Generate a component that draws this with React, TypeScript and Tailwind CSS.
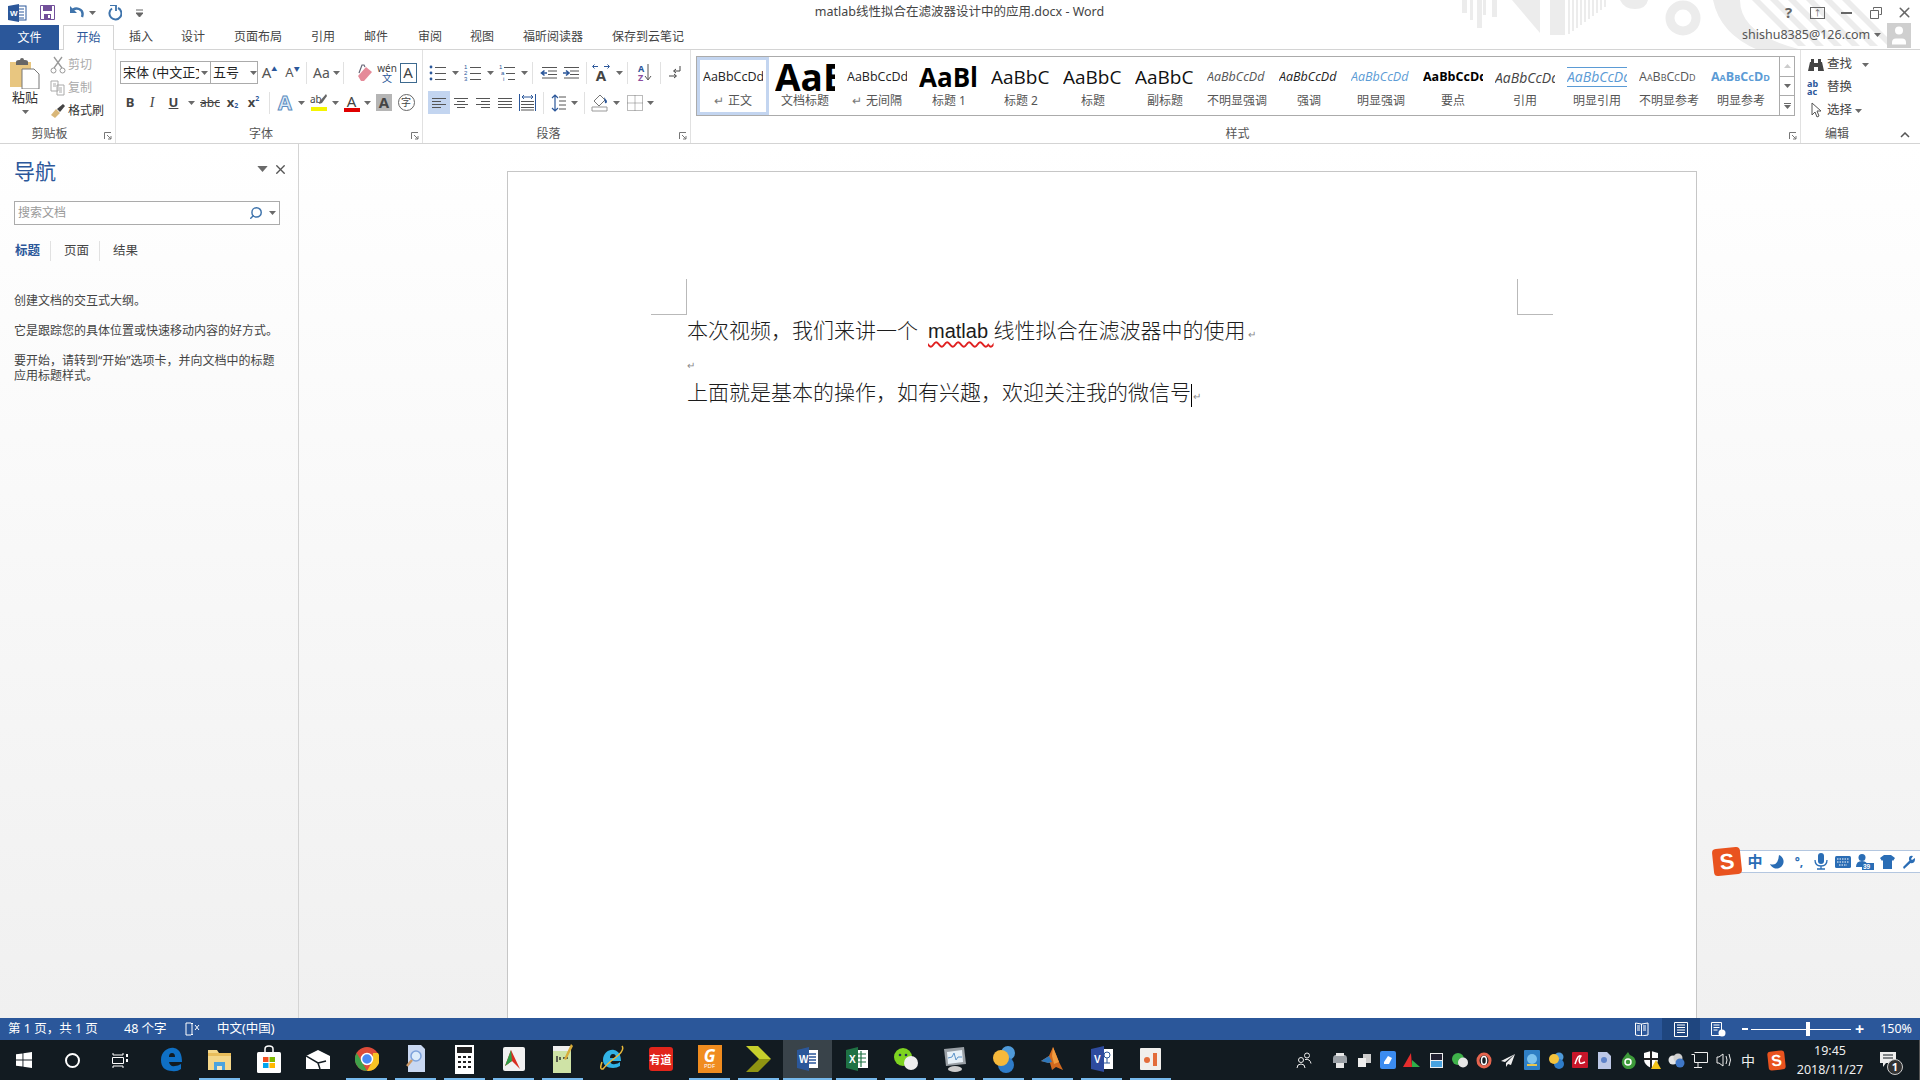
import type { ReactNode } from "react";
import { Search, User, X } from "lucide-react";

const BLUE = "#2b579a";

function Caret({ className = "", color = "#6a6a6a" }: { className?: string; color?: string }) {
  return (
    <svg width="7" height="4" viewBox="0 0 7 4" className={className}>
      <path d="M0 0h7L3.500 4z" fill={color} />
    </svg>
  );
}

function Sep({ className = "h-[22px]" }: { className?: string }) {
  return <div className={`w-px shrink-0 bg-[#e1e1e1] ${className}`} />;
}

function Launcher() {
  return (
    <svg width="8" height="8" viewBox="0 0 8 8" className="mt-[4px] shrink-0">
      <path d="M.5 7V.5H7M3 3l4 4M7 4v3H4" fill="none" stroke="#777" strokeWidth="1" />
    </svg>
  );
}

function Tool({ className, children }: { className: string; children: ReactNode }) {
  return <div className={`flex h-[23px] shrink-0 items-center justify-center ${className}`}>{children}</div>;
}

function Lines({ kind }: { kind: "left" | "center" | "right" | "justify" }) {
  const rows: [number, number][] =
    kind === "left"
      ? [[1, 15], [1, 10], [1, 15], [1, 10]]
      : kind === "center"
        ? [[1, 15], [4, 12], [1, 15], [4, 12]]
        : kind === "right"
          ? [[1, 15], [6, 15], [1, 15], [6, 15]]
          : [[1, 15], [1, 15], [1, 15], [1, 15]];
  return (
    <svg width="16" height="14" viewBox="0 0 16 14">
      {rows.map(([a, b], i) => (
        <path key={i} d={`M${a} ${2.5 + i * 3}H${b}`} stroke="#555" strokeWidth="1" />
      ))}
    </svg>
  );
}

function ListIcon({ kind }: { kind: "bullet" | "number" | "multi" }) {
  return (
    <svg width="18" height="16" viewBox="0 0 18 16">
      {[2, 8, 14].map((y, i) =>
        kind === "bullet" ? (
          <circle key={y} cx="2" cy={y} r="1.400" fill={BLUE} />
        ) : (
          <text key={y} x={kind === "multi" ? 1 + i * 2 : 0} y={y + 2} fontSize="6" fill={BLUE} fontFamily="Liberation Sans">
            {kind === "multi" ? ["1", "a", "i"][i] : i + 1}
          </text>
        ),
      )}
      {[2, 8, 14].map((y, i) => (
        <path key={y} d={`M${kind === "multi" ? 6 + i * 2 : 6} ${y + 0.5}H17`} stroke="#555" strokeWidth="1" />
      ))}
    </svg>
  );
}

function IndentIcon({ increase }: { increase?: boolean }) {
  return (
    <svg width="18" height="14" viewBox="0 0 18 14">
      {[1.5, 5, 8.5, 12].map((y, i) => (
        <path key={y} d={`M${i === 0 || i === 3 ? 2 : 8} ${y}H17`} stroke="#555" strokeWidth="1" />
      ))}
      <path
        d={increase ? "M1 7h5M4 4.500L7 7l-3 2.500" : "M7 7H2M4.500 4.500L1.500 7l3 2.500"}
        fill="none"
        stroke={BLUE}
        strokeWidth="1.600"
      />
    </svg>
  );
}

function WatermarkArt() {
  const c = "#ececec";
  return (
    <svg width="480" height="50" viewBox="0 0 480 50" className="pointer-events-none absolute top-0 right-0">
      {[22, 30, 37, 43, 52].map((x, i) => (
        <rect key={x} x={x} y="0" width={i % 2 ? 3 : 5} height={[13, 20, 28, 15, 17][i]} fill={c} />
      ))}
      <path d="M72 0h28v33z" fill={c} />
      <rect x="110" y="0" width="15" height="35" fill={c} />
      {[128, 132, 136, 140, 144, 148, 152, 156, 160, 164].map((x, i) => (
        <rect key={x} x={x} y="0" width="2" height={34 - i * 3} fill={c} />
      ))}
      <path d="M180 0h28q-2 9-13 9t-15-9z" fill={c} />
      <circle cx="243" cy="18" r="13" fill="none" stroke={c} strokeWidth="9" />
      <path d="M273 0q7 34 45 50h44Q300 35 300 0z" fill={c} />
      {[312, 330, 348, 366, 384, 402].map((x) => (
        <path key={x} d={`M${x} 0l46 46h8l-46-46z`} fill={c} />
      ))}
    </svg>
  );
}

function TitleBar() {
  return (
    <div className="flex h-[25px] shrink-0 items-center pl-[8px] text-[12.500px] text-[#444]">
      <svg width="19" height="18" viewBox="0 0 19 18" className="shrink-0">
        <rect x="6" y="2" width="12" height="14" fill="#fff" stroke={BLUE} />
        <path d="M10 5h6M10 8h6M10 11h6M10 14h6" stroke={BLUE} />
        <path d="M0 2l11-2v18L0 16z" fill={BLUE} />
        <text x="2" y="12" fontSize="8" fontWeight="700" fill="#fff" fontFamily="Liberation Sans">W</text>
      </svg>
      <svg width="15" height="15" viewBox="0 0 15 15" className="ml-[13px] shrink-0">
        <path d="M.5.5h14v14H.5z" fill="#fff" stroke="#72509a" />
        <path d="M3 1h9v5H3zM4 9h7v5H4z" fill="#72509a" />
        <rect x="8" y="10" width="2" height="3" fill="#fff" />
      </svg>
      <svg width="16" height="15" viewBox="0 0 16 15" className="ml-[14px] shrink-0">
        <path d="M2 7q3-5 8-3t3 8" fill="none" stroke="#3f74ac" strokeWidth="2.400" />
        <path d="M1 1v7h7z" fill="#3f74ac" />
      </svg>
      <Caret className="ml-[4px]" />
      <svg width="15" height="16" viewBox="0 0 15 16" className="ml-[11px] shrink-0">
        <path d="M5 3.500A6 6 0 1 0 11 3" fill="none" stroke="#3f74ac" strokeWidth="2" />
        <path d="M3 0h6v6" fill="none" stroke="#3f74ac" strokeWidth="1.800" />
      </svg>
      <svg width="7" height="8" viewBox="0 0 7 8" className="ml-[14px] shrink-0">
        <path d="M0 1h7M0 4h7l-3.500 4z" stroke="#666" fill="#666" />
      </svg>
      <div className="flex-1 pl-[2px] text-center text-[#444]">matlab线性拟合在滤波器设计中的应用.docx - Word</div>
      <div className="relative flex h-[25px] w-[146px] shrink-0 items-center text-[#666]">
        <div className="flex w-[29px] justify-center text-[15px] font-bold">?</div>
        <div className="flex w-[29px] justify-center">
          <div className="flex h-[12px] w-[15px] items-center justify-center border border-[#666] text-[8px] leading-none">↑</div>
        </div>
        <div className="flex w-[29px] justify-center">
          <div className="h-[2px] w-[11px] bg-[#666]" />
        </div>
        <div className="flex w-[29px] justify-center">
          <svg width="12" height="12" viewBox="0 0 12 12">
            <path d="M3.500 2.500V.5h8v7h-2M.5 3.500h8v8h-8z" fill="none" stroke="#666" />
          </svg>
        </div>
        <div className="flex w-[29px] justify-center">
          <X size={17} strokeWidth={2.200} />
        </div>
      </div>
    </div>
  );
}

function TabRow() {
  const tabs: [string, string][] = [
    ["插入", "w-[54px]"],
    ["设计", "w-[50px]"],
    ["页面布局", "w-[80px]"],
    ["引用", "w-[50px]"],
    ["邮件", "w-[56px]"],
    ["审阅", "w-[52px]"],
    ["视图", "w-[52px]"],
    ["福昕阅读器", "w-[90px]"],
    ["保存到云笔记", "w-[100px]"],
  ];
  return (
    <div className="relative flex h-[25px] shrink-0 border-b border-[#d4d4d4] text-[12px] text-[#444]">
      <div className="flex h-[25px] w-[59px] items-center justify-center bg-[#2b579a] text-white">文件</div>
      <div className="relative z-10 ml-[4px] flex h-[25px] w-[51px] items-center justify-center border-x border-t border-[#d4d4d4] bg-white text-[#2b579a]">
        开始
      </div>
      {tabs.map(([label, w]) => (
        <div key={label} className={`flex items-center justify-center ${w}`}>
          {label}
        </div>
      ))}
      <div className="ml-auto flex w-[178px] items-center pb-[4px] text-[#555]">
        <span className="w-[130px] text-[12.500px] whitespace-nowrap">shishu8385@126.com</span>
        <Caret className="ml-[2px]" />
        <div className="ml-[6px] flex h-[25px] w-[24px] items-end justify-center overflow-hidden bg-[#cfcfcf] pb-0 text-white">
          <User size={25} fill="#fff" strokeWidth={0} />
        </div>
      </div>
    </div>
  );
}

function Group({ label, className, launcher, children }: { label: string; className: string; launcher?: boolean; children: ReactNode }) {
  return (
    <div className={`flex shrink-0 flex-col border-r border-[#e1e1e1] ${className}`}>
      <div className="h-[75px] overflow-hidden">{children}</div>
      <div className="flex h-[18px] items-center pr-[3px] text-[12px] text-[#555]">
        <span className={`flex-1 text-center ${launcher ? "mr-[5px]" : ""}`}>{label}</span>
        {launcher && <Launcher />}
      </div>
    </div>
  );
}

function Clipboard() {
  return (
    <Group label="剪贴板" className="w-[116px]" launcher>
      <div className="flex">
        <div className="flex w-[50px] flex-col items-center pt-[8px] text-[13px] text-[#333]">
          <svg width="30" height="31" viewBox="0 0 30 31">
            <path d="M0 4h21v25H0z" fill="#e8c680" />
            <path d="M6 4q0-2 3-2h1q0-2 2-2t2 2h1q3 0 3 2v3H6z" fill="#666" />
            <path d="M12 11h12l5 5v15H12z" fill="#fff" stroke="#777" />
          </svg>
          <span className="leading-[17px]">粘贴</span>
          <Caret className="mt-[4px]" />
        </div>
        <div className="flex flex-col pt-[3px] text-[12px] leading-[23px]">
          <div className="flex h-[23px] items-center text-[#aaa]">
            <svg width="16" height="18" viewBox="0 0 16 18">
              <path d="M4 1l8 11M12 1L4 12" stroke="#999" strokeWidth="1.300" />
              <circle cx="3.500" cy="14.500" r="2.500" fill="none" stroke="#999" />
              <circle cx="12.500" cy="14.500" r="2.500" fill="none" stroke="#999" />
            </svg>
            <span className="ml-[2px]">剪切</span>
          </div>
          <div className="flex h-[23px] items-center text-[#aaa]">
            <svg width="16" height="16" viewBox="0 0 16 16">
              <path d="M1 1h7v10H1zM7 5h7v10H7z" fill="#fff" stroke="#aaa" />
              <path d="M3 4h3M3 6h3M9 8h3M9 10h3M9 12h3" stroke="#aaa" />
            </svg>
            <span className="ml-[2px]">复制</span>
          </div>
          <div className="flex h-[23px] items-center text-[#333]">
            <svg width="16" height="16" viewBox="0 0 16 16">
              <path d="M1 12l5-6 4 4-5 5z" fill="#d9b779" />
              <path d="M7 6l6-5 2 2-5 6z" fill="#444" />
            </svg>
            <span className="ml-[2px]">格式刷</span>
          </div>
        </div>
      </div>
    </Group>
  );
}

function FontGroup() {
  return (
    <Group label="字体" className="w-[307px]" launcher>
      <div className="flex h-[34px] items-center pl-[4px] pt-[11px]">
        <div className="flex h-[23px] w-[91px] items-center border border-[#ababab] pl-[2px] text-[13px] text-[#222]">
          <span className="w-[76px] overflow-hidden whitespace-nowrap">宋体 (中文正文)</span>
          <Caret className="ml-[2px]" />
        </div>
        <div className="-ml-px flex h-[23px] w-[48px] items-center border border-[#ababab] pl-[2px] text-[13px] text-[#222]">
          <span className="w-[33px]">五号</span>
          <Caret className="ml-[4px]" />
        </div>
        <Tool className="w-[23px] text-[15px] text-[#555]">A<span className="mb-[6px] text-[6px] text-[#2b579a]">▲</span></Tool>
        <Tool className="w-[23px] text-[13px] text-[#555]">A<span className="mb-[6px] text-[6px] text-[#2b579a]">▼</span></Tool>
        <Sep className="ml-[2px] h-[22px]" />
        <Tool className="ml-[3px] w-[33px] text-[14px] text-[#555]">Aa<Caret className="ml-[3px]" /></Tool>
        <Sep />
        <Tool className="ml-[10px] w-[22px]">
          <svg width="18" height="18" viewBox="0 0 18 18">
            <path d="M2 12l8-9 6 5-8 9H5z" fill="#e58a99" />
            <path d="M3 9l3-8h2l1 2" fill="none" stroke="#667" strokeWidth="1.200" />
          </svg>
        </Tool>
        <Tool className="w-[22px] flex-col text-[10px] leading-[10px] text-[#444]">
          wén<span className="text-[#2b579a]">文</span>
        </Tool>
        <Tool className="w-[20px]">
          <div className="flex h-[20px] w-[17px] items-center justify-center border border-[#3d6a8f] text-[15px] text-[#444]">A</div>
        </Tool>
      </div>
      <div className="mt-[7px] flex items-center pl-[3px] text-[#444]">
        <Tool className="w-[22px] text-[13px] font-bold">B</Tool>
        <Tool className="w-[22px] font-['Liberation_Serif',serif] text-[14px] italic">I</Tool>
        <Tool className="w-[21px] text-[13px] font-bold underline">U</Tool>
        <Tool className="w-[14px]"><Caret /></Tool>
        <Tool className="w-[24px] text-[12px] line-through">abc</Tool>
        <Tool className="w-[21px] text-[13px] font-bold">x<span className="mt-[7px] text-[7px] text-[#2b579a]">2</span></Tool>
        <Tool className="w-[21px] text-[13px] font-bold">x<span className="mb-[7px] text-[7px] text-[#2b579a]">2</span></Tool>
        <Sep className="ml-[5px] h-[22px]" />
        <Tool className="ml-[4px] w-[22px] text-[20px] font-bold text-[#dceaf7] [-webkit-text-stroke:1px_#5b8cc0]">A</Tool>
        <Tool className="w-[10px]"><Caret /></Tool>
        <Tool className="w-[25px]">
          <div className="relative flex w-[17px] flex-col items-center">
            <span className="h-[11px] self-start text-[10px] leading-[10px] text-[#444]">ab</span>
            <svg width="9" height="11" viewBox="0 0 9 11" className="absolute top-0 right-0">
              <path d="M8 0l1 2-5 7-3 1 1-3z" fill="#666" />
            </svg>
            <div className="mt-[2px] h-[4px] w-[16px] bg-[#f5f500]" />
          </div>
        </Tool>
        <Tool className="w-[8px]"><Caret /></Tool>
        <Tool className="ml-[1px] w-[23px]">
          <div className="flex w-[17px] flex-col items-center">
            <span className="h-[14px] text-[15px] leading-[14px] text-[#444]">A</span>
            <div className="h-[4px] w-[16px] bg-[#e00000]" />
          </div>
        </Tool>
        <Tool className="w-[9px]"><Caret /></Tool>
        <Tool className="ml-[1px] w-[22px]">
          <div className="flex h-[17px] w-[16px] items-center justify-center bg-[#b5b5b5] text-[15px] font-bold text-[#444]">A</div>
        </Tool>
        <Tool className="w-[22px]">
          <div className="flex h-[17px] w-[17px] items-center justify-center rounded-full border border-[#666] text-[10px]">字</div>
        </Tool>
      </div>
    </Group>
  );
}

function ParagraphGroup() {
  return (
    <Group label="段落" className="w-[268px]" launcher>
      <div className="flex h-[34px] items-center pl-[5px] pt-[11px]">
        <Tool className="w-[20px]"><ListIcon kind="bullet" /></Tool>
        <Tool className="w-[14px]"><Caret /></Tool>
        <Tool className="w-[22px]"><ListIcon kind="number" /></Tool>
        <Tool className="w-[12px]"><Caret /></Tool>
        <Tool className="w-[22px]"><ListIcon kind="multi" /></Tool>
        <Tool className="w-[12px]"><Caret /></Tool>
        <Sep className="ml-[2px] h-[22px]" />
        <Tool className="ml-[5px] w-[22px]"><IndentIcon /></Tool>
        <Tool className="w-[22px]"><IndentIcon increase /></Tool>
        <Sep className="ml-[4px] h-[22px]" />
        <Tool className="ml-[2px] w-[24px]">
          <div className="flex flex-col items-center text-[15px] leading-[13px] font-bold text-[#444]">
            <svg width="18" height="5" viewBox="0 0 18 5">
              <path d="M1 2.500h5M2.500 .5L.5 2.500l2 2M12 2.500h5M15.500 .5l2 2-2 2" fill="none" stroke={BLUE} />
            </svg>
            A
          </div>
        </Tool>
        <Tool className="w-[12px]"><Caret /></Tool>
        <Sep className="ml-[2px] h-[22px]" />
        <Tool className="ml-[6px] w-[22px]">
          <div className="flex flex-col text-[9px] leading-[9px] font-bold">
            <span className="text-[#2b579a]">A</span>
            <span className="text-[#8a4d9e]">Z</span>
          </div>
          <svg width="8" height="17" viewBox="0 0 8 17"><path d="M4 0v15M1 12l3 4 3-4" fill="none" stroke="#555" /></svg>
        </Tool>
        <Sep className="ml-[4px] h-[22px]" />
        <Tool className="ml-[4px] w-[22px]">
          <svg width="16" height="15" viewBox="0 0 16 15">
            <path d="M12 1v5H6M8 4L5.500 6 8 8" fill="none" stroke="#444" />
            <path d="M1 11h7M6 9l2.500 2L6 13" fill="none" stroke="#444" />
          </svg>
        </Tool>
      </div>
      <div className="mt-[7px] flex items-center pl-[5px]">
        <Tool className="w-[22px] bg-[#c3d5f0]"><Lines kind="left" /></Tool>
        <Tool className="w-[22px]"><Lines kind="center" /></Tool>
        <Tool className="w-[22px]"><Lines kind="right" /></Tool>
        <Tool className="w-[22px]"><Lines kind="justify" /></Tool>
        <Tool className="w-[22px]">
          <svg width="17" height="17" viewBox="0 0 17 17">
            <path d="M.5 0v17M16.500 0v17" stroke={BLUE} />
            <path d="M3 3h11M5 1L3 3l2 2M12 1l2 2-2 2" fill="none" stroke={BLUE} />
            <path d="M2 7.500h13M2 10.500h13M2 13.500h13M2 16h13" stroke="#555" />
          </svg>
        </Tool>
        <Sep className="ml-[5px] h-[22px]" />
        <Tool className="ml-[4px] w-[22px]">
          <svg width="16" height="18" viewBox="0 0 16 18">
            <path d="M4 1v16M1 4l3-3 3 3M1 14l3 3 3-3" fill="none" stroke={BLUE} strokeWidth="1.200" />
            <path d="M8 3h7M8 7h7M8 11h7M8 15h7" stroke="#555" />
          </svg>
        </Tool>
        <Tool className="w-[8px]"><Caret /></Tool>
        <Sep className="ml-[6px] h-[22px]" />
        <Tool className="ml-[4px] w-[22px]">
          <svg width="18" height="19" viewBox="0 0 18 19">
            <path d="M3 8l6-6 5 5-6 6z" fill="#fff" stroke="#777" />
            <path d="M13 4l3 4q0 3-2 2z" fill={BLUE} />
            <path d="M1 14h15v4H1z" fill="#fff" stroke="#999" />
          </svg>
        </Tool>
        <Tool className="w-[11px]"><Caret /></Tool>
        <Tool className="ml-[3px] w-[20px]">
          <svg width="16" height="16" viewBox="0 0 16 16">
            <path d="M.5.5h15v15H.5zM8 .5v15M.5 8h15" fill="none" stroke="#777" strokeDasharray="1 1" />
          </svg>
        </Tool>
        <Tool className="ml-[1px] w-[8px]"><Caret /></Tool>
      </div>
    </Group>
  );
}

type StyleItem = { label: ReactNode; preview: string; cls: string };

const STYLES: StyleItem[] = [
  { label: <><span className="mr-[4px] text-[#777]">↵</span>正文</>, preview: "AaBbCcDd", cls: "text-[12.500px] text-[#222]" },
  { label: "文档标题", preview: "AaBl", cls: "text-[37px] font-bold text-black leading-[30px]" },
  { label: <><span className="mr-[4px] text-[#777]">↵</span>无间隔</>, preview: "AaBbCcDd", cls: "text-[12.500px] text-[#222]" },
  { label: "标题 1", preview: "AaBl", cls: "text-[26px] font-bold text-black" },
  { label: "标题 2", preview: "AaBbC", cls: "text-[19px] text-[#111]" },
  { label: "标题", preview: "AaBbC", cls: "text-[19px] text-[#111]" },
  { label: "副标题", preview: "AaBbC", cls: "text-[19px] text-[#111]" },
  { label: "不明显强调", preview: "AaBbCcDd", cls: "text-[12.500px] italic text-[#555]" },
  { label: "强调", preview: "AaBbCcDd", cls: "text-[12.500px] italic text-[#222]" },
  { label: "明显强调", preview: "AaBbCcDd", cls: "text-[12.500px] italic text-[#5b9bd5]" },
  { label: "要点", preview: "AaBbCcDd", cls: "text-[12.500px] font-bold text-black" },
  { label: "引用", preview: "AaBbCcDd", cls: "text-[14px] italic text-[#444]" },
  { label: "明显引用", preview: "AaBbCcDd", cls: "text-[14px] italic text-[#5b9bd5] border-y border-[#5b9bd5] leading-[18px]" },
  { label: "不明显参考", preview: "AaBbCcDd", cls: "text-[12.500px] [font-variant:small-caps] text-[#555]" },
  { label: "明显参考", preview: "AaBbCcDd", cls: "text-[12.500px] [font-variant:small-caps] font-bold text-[#5b9bd5]" },
];

function StylesGroup() {
  return (
    <Group label="样式" className="w-[1110px]" launcher>
      <div className="flex pt-[6px] pl-[5px]">
        <div className="flex h-[60px] w-[1084px] border border-[#ababab] bg-white">
          {STYLES.map((s, i) => (
            <div
              key={i}
              className={`flex h-full w-[72px] shrink-0 flex-col items-center ${i === 0 ? "border-[3px] border-[#c3d5f0] pt-[2px]" : "pt-[5px]"}`}
            >
              <div className="flex h-[30px] w-[60px] items-center justify-start overflow-hidden">
                <span className={`whitespace-nowrap font-['Open_Sans',sans-serif] ${s.cls}`}>{s.preview}</span>
              </div>
              <div className="mt-[1px] text-[12px] leading-[16px] whitespace-nowrap text-[#555]">{s.label}</div>
            </div>
          ))}
        </div>
        <div className="flex h-[60px] w-[15px] flex-col border-y border-r border-[#ababab]">
          <div className="flex flex-1 items-center justify-center border-b border-[#ababab]"><Caret className="rotate-180" color="#ccc" /></div>
          <div className="flex flex-1 items-center justify-center border-b border-[#ababab]"><Caret /></div>
          <div className="flex flex-1 flex-col items-center justify-center">
            <div className="mb-[1px] h-px w-[7px] bg-[#6a6a6a]" />
            <Caret />
          </div>
        </div>
      </div>
    </Group>
  );
}

function EditGroup() {
  return (
    <Group label="编辑" className="w-[75px] border-r-0">
      <div className="flex flex-col pt-[3px] pl-[6px] text-[12.500px] text-[#444]">
        <div className="flex h-[23px] items-center">
          <svg width="18" height="16" viewBox="0 0 18 16">
            <path d="M1 14l2-9h4v9zM11 14V5h4l2 9zM4 2h3v3H4zM11 2h3v3h-3zM7 6h4v4H7z" fill="#444" />
          </svg>
          <span className="ml-[2px]">查找</span>
          <Caret className="ml-[10px]" />
        </div>
        <div className="flex h-[23px] items-center">
          <div className="flex w-[18px] flex-col text-[9px] leading-[8px] font-bold">
            <span className="text-[#2b579a]">ab</span>
            <span className="text-[#2b579a]">ac</span>
          </div>
          <span className="ml-[2px]">替换</span>
        </div>
        <div className="flex h-[23px] items-center">
          <svg width="18" height="17" viewBox="0 0 18 17">
            <path d="M5 1v12l3-3 2 5 2-1-2-5h4z" fill="#fff" stroke="#555" />
          </svg>
          <span className="ml-[2px]">选择</span>
          <Caret className="ml-[3px]" />
        </div>
      </div>
    </Group>
  );
}

function Ribbon() {
  return (
    <div className="flex h-[94px] shrink-0 border-b border-[#d4d4d4] bg-white">
      <Clipboard />
      <FontGroup />
      <ParagraphGroup />
      <StylesGroup />
      <EditGroup />
      <div className="flex flex-1 items-end justify-center pb-[5px] pl-[14px]">
        <svg width="10" height="6" viewBox="0 0 10 6"><path d="M1 5l4-4 4 4" fill="none" stroke="#555" strokeWidth="1.500" /></svg>
      </div>
    </div>
  );
}

function NavPane() {
  return (
    <div className="flex w-[299px] shrink-0 flex-col border-r border-[#d4d4d4] pl-[14px] pr-[18px] text-[12px] text-[#444]">
      <div className="-mr-[8px] flex h-[54px] items-center">
        <span className="flex-1 text-[21px] leading-none text-[#2b579a]">导航</span>
        <Caret className="mb-[4px] scale-150" />
        <X size={15} strokeWidth={2.200} className="mb-[4px] ml-[7px] text-[#555]" />
      </div>
      <div className="mt-[3px] flex h-[24px] items-center border border-[#ababab] bg-white pr-[3px] pl-[3px] text-[#999]">
        <span className="flex-1">搜索文档</span>
        <Search size={14} strokeWidth={2.500} className="-scale-x-100 text-[#3f74ac]" />
        <Caret className="ml-[6px]" />
      </div>
      <div className="mt-[14px] flex h-[24px] items-center text-[12.500px]">
        <span className="w-[36px] pl-[1px] font-bold text-[#2b579a]">标题</span>
        <Sep className="h-[20px]" />
        <span className="w-[48px] pl-[13px]">页面</span>
        <Sep className="h-[20px]" />
        <span className="pl-[13px]">结果</span>
      </div>
      <p className="mt-[30px] leading-[15px]">创建文档的交互式大纲。</p>
      <p className="mt-[15px] leading-[15px]">它是跟踪您的具体位置或快速移动内容的好方式。</p>
      <p className="mt-[15px] leading-[15px]">要开始，请转到“开始”选项卡，并向文档中的标题应用标题样式。</p>
    </div>
  );
}

function CropMark({ className }: { className: string }) {
  return <div className={`absolute h-[36px] w-[36px] border-[#b9b9b9] ${className}`} />;
}

function ParaMark() {
  return <span className="ml-[2px] font-['Liberation_Sans',sans-serif] text-[10px] leading-none text-[#8a8a8a]">↵</span>;
}

function Document() {
  return (
    <div className="flex min-w-0 flex-1 pt-[27px] pl-[208px]">
      <div className="relative w-[1190px] border-x border-t border-[#c6c6c6] bg-white pt-[143px] pl-[179px] text-[21px] leading-[31px] font-light text-[#1c1c1c]">
        <CropMark className="top-[107px] left-[143px] border-r border-b" />
        <CropMark className="top-[107px] right-[143px] border-b border-l" />
        <p className="whitespace-nowrap">
          本次视频，我们来讲一个
          <span className="ml-[10px] font-['Liberation_Sans',sans-serif] text-[20px] leading-none font-normal underline decoration-[#e02020] decoration-wavy decoration-[1.500px] underline-offset-[3px]">
            matlab{"\u00a0"}
          </span>
          线性拟合在滤波器中的使用
          <ParaMark />
        </p>
        <p className="-ml-[2px]"><ParaMark /></p>
        <p className="whitespace-nowrap">
          上面就是基本的操作，如有兴趣，欢迎关注我的微信号
          <span className="relative"><span className="absolute top-[6px] left-0 h-[23px] w-px bg-black" /></span>
          <ParaMark />
        </p>
      </div>
    </div>
  );
}

function SogouBar() {
  const item = "flex w-[22px] shrink-0 justify-center";
  return (
    <div className="absolute top-[848px] right-0 flex items-center">
      <div className="relative z-10 flex h-[27px] w-[28px] -rotate-6 items-center justify-center rounded-[4px] bg-[#e9531f] font-['Liberation_Sans',sans-serif] text-[22px] font-bold text-white">
        S
      </div>
      <div className="-ml-[2px] flex h-[23px] w-[181px] items-center border-y border-[#b4c7e0] bg-white pl-[5px] text-[#2a6db5]">
        <div className={`${item} text-[15px] font-bold`}>中</div>
        <div className={item}><svg width="14" height="14" viewBox="0 0 14 14"><path d="M9 0a7 7 0 1 1-9 9q8 3 9-9z" fill="currentColor" /></svg></div>
        <div className={`${item} text-[12px] leading-none font-bold`}>°,</div>
        <div className={item}><svg width="14" height="17" viewBox="0 0 14 17"><rect x="4" y="0" width="6" height="11" rx="3" fill="currentColor" /><path d="M1 7q0 6 6 6t6-6M7 13v3M3 16h8" fill="none" stroke="currentColor" strokeWidth="1.300" /></svg></div>
        <div className={item}><svg width="16" height="12" viewBox="0 0 16 12"><rect width="16" height="12" rx="1.500" fill="currentColor" /><path d="M2 3h12M2 6h12M4 9h8" stroke="#fff" strokeDasharray="1.500 1" /></svg></div>
        <div className={item}>
          <svg width="18" height="16" viewBox="0 0 18 16">
            <circle cx="6" cy="3.500" r="3.500" fill="currentColor" />
            <path d="M0 13q0-6 6-6t5 6z" fill="currentColor" />
            <rect x="6" y="9" width="12" height="7" fill="currentColor" />
            <text x="7" y="15" fontSize="6.500" fontWeight="700" fill="#fff" fontFamily="Liberation Sans">39</text>
          </svg>
        </div>
        <div className={item}><svg width="15" height="14" viewBox="0 0 15 14"><path d="M0 3l4-3h7l4 3-2 3-1-1v9H3V5L2 6z" fill="currentColor" /></svg></div>
        <div className={item}><svg width="14" height="14" viewBox="0 0 14 14"><path d="M13 3l-3 2-1-1 2-3Q7 0 7 4q0 1 .5 1.500L1 12l1 2 6.500-6q5 1 4.500-5z" fill="currentColor" /></svg></div>
      </div>
    </div>
  );
}

function StatusBar() {
  return (
    <div className="flex h-[22px] shrink-0 items-center bg-[#2b579a] pl-[8px] text-[12.500px] text-white">
      <span className="w-[116px]">第 1 页，共 1 页</span>
      <span className="w-[61px]">48 个字</span>
      <svg width="15" height="14" viewBox="0 0 15 14"><path d="M1 1h5l1 1 1-1h0M1 1v12h5l1-1v-10M7 12l1 1" fill="none" stroke="#fff" /><path d="M10 3l4 5M14 3l-4 5" stroke="#fff" /></svg>
      <span className="ml-[17px]">中文(中国)</span>
      <div className="ml-auto flex h-full items-center pr-[8px]">
        <svg width="14" height="14" viewBox="0 0 14 14"><path d="M.5 1l6 1 6.500-1v12l-6.500 1-6-1zM6.500 2v12M2 4h3M2 6h3M2 8h3M8 4h3M8 6h3M8 8h3" fill="none" stroke="#fff" /></svg>
        <div className="ml-[13px] flex h-full w-[38px] items-center justify-center bg-[#1f467f]">
          <svg width="14" height="15" viewBox="0 0 14 15"><path d="M.5.5h13v14H.5zM3 3h8M3 5.500h8M3 8h8M3 10.500h8" fill="none" stroke="#fff" /></svg>
        </div>
        <svg width="15" height="15" viewBox="0 0 15 15" className="ml-[11px]"><path d="M.5.500h10v13H.5zM2.500 3h6M2.500 5.500h6M2.500 8h4" fill="none" stroke="#fff" /><circle cx="11" cy="11" r="3.500" fill="#fff" /></svg>
        <div className="ml-[16px] h-[2px] w-[6px] bg-white" />
        <div className="relative ml-[3px] flex h-[14px] w-[100px] items-center">
          <div className="h-px w-full bg-white" />
          <div className="absolute left-[55px] h-[14px] w-[4px] bg-white" />
        </div>
        <span className="ml-[4px] text-[16px] leading-none font-bold">+</span>
        <span className="ml-[16px] text-[12.500px]">150%</span>
      </div>
    </div>
  );
}

function TaskIcon({ run, active, children }: { run?: boolean; active?: boolean; children: ReactNode }) {
  return (
    <div className={`relative flex h-10 w-[49px] shrink-0 items-center justify-center pb-[2px] ${active ? "bg-[#39434a]" : ""}`}>
      {children}
      {run && <div className={`absolute bottom-0 h-[2px] bg-[#76b9ed] ${active ? "inset-x-0" : "inset-x-[4px]"}`} />}
    </div>
  );
}

function Taskbar() {
  const tray: ReactNode[] = [
    <svg key="a" width="17" height="17" viewBox="0 0 17 17"><path d="M1 6q0-2 2-3h10q2 1 2 3v5H1z" fill="#9aa0a6" /><path d="M4 1h8v3H4zM4 11h8v5H4z" fill="#e8e8e8" /></svg>,
    <svg key="b" width="13" height="13" viewBox="0 0 13 13"><path d="M5 0h8v9H5z" fill="#ccc" /><path d="M0 4h8v9H0z" fill="#eee" /></svg>,
    <svg key="c" width="16" height="18" viewBox="0 0 16 18"><rect width="16" height="18" rx="2" fill="#3b8cf0" /><path d="M4 11l4-6 4 2-3 6H4z" fill="#fff" /></svg>,
    <svg key="d" width="18" height="14" viewBox="0 0 18 14"><path d="M0 14L8 0l1 14z" fill="#e52d2d" /><path d="M9 7l8 7H9z" fill="#2fb04a" /></svg>,
    <svg key="e" width="13" height="15" viewBox="0 0 13 15"><rect width="13" height="15" fill="#eee" /><rect x="1" y="8" width="11" height="6" fill="#4aa3df" /><rect x="1" y="1" width="11" height="6" fill="#223" /></svg>,
    <svg key="f" width="18" height="15" viewBox="0 0 18 15"><circle cx="7" cy="6" r="6" fill="#3fb24a" /><circle cx="12" cy="9.500" r="5" fill="#e6e6e6" /></svg>,
    <svg key="g" width="16" height="17" viewBox="0 0 16 17"><ellipse cx="8" cy="8.500" rx="6" ry="6.500" fill="none" stroke="#e4644e" strokeWidth="3" /><ellipse cx="8" cy="8.500" rx="2.500" ry="4" fill="none" stroke="#fff" strokeWidth="1.500" /></svg>,
    <svg key="h" width="14" height="13" viewBox="0 0 14 13"><path d="M14 0L0 7l4 1zM14 0L5 9v4l2-3 3 1z" fill="#eee" /></svg>,
    <svg key="i" width="16" height="20" viewBox="0 0 16 20"><rect width="16" height="20" rx="1" fill="#2f7fc5" /><circle cx="8" cy="9" r="5" fill="#7ec3ee" /><path d="M3 15h10" stroke="#e8c64f" strokeWidth="2" /></svg>,
    <svg key="j" width="16" height="18" viewBox="0 0 16 18"><circle cx="11" cy="6" r="4.500" fill="#4f9ad9" /><circle cx="11" cy="13" r="5" fill="#2e7cc9" /><circle cx="6" cy="8" r="5" fill="#f3c33e" /></svg>,
    <svg key="k" width="16" height="16" viewBox="0 0 16 16"><rect width="16" height="16" rx="1" fill="#c8162a" /><path d="M3 12q3-10 6-8-3 4-1 7 1 1 5-1" fill="none" stroke="#fff" strokeWidth="1.500" /></svg>,
    <svg key="l" width="13" height="17" viewBox="0 0 13 17"><path d="M0 0h9l4 4v13H0z" fill="#bcc7e6" /><circle cx="6" cy="8" r="3" fill="#5e82c9" /></svg>,
    <svg key="m" width="16" height="17" viewBox="0 0 16 17"><path d="M8 0q1 3 4 4a7 7 0 1 1-8 1z" fill="#3d9a3a" /><circle cx="8" cy="10" r="3" fill="none" stroke="#fff" strokeWidth="1.500" /></svg>,
    <svg key="n" width="18" height="18" viewBox="0 0 18 18"><path d="M8 0l7 2v6q0 6-7 9-7-3-7-9V2z" fill="#fff" /><path d="M8 0v17M1 8h14" stroke="#222" strokeWidth="2" /><path d="M13 9l5 9H8z" fill="#f5c518" /></svg>,
    <svg key="o" width="18" height="15" viewBox="0 0 18 15"><circle cx="6" cy="7" r="4.500" fill="#e5e5e5" /><circle cx="11" cy="5" r="4.500" fill="#cfcfcf" /><circle cx="13" cy="10" r="4.500" fill="#3f77c7" /></svg>,
    <svg key="p" width="18" height="16" viewBox="0 0 18 16"><path d="M.5 2.500h3v8h13v-10h-13M7 10.500v5M3 15.500h8" fill="none" stroke="#eee" /></svg>,
    <svg key="q" width="16" height="16" viewBox="0 0 16 16"><path d="M1 5v6h2l4 3V2L3 5zM10 4q2 4 0 8M13 2q3 6 0 12" fill="none" stroke="#eee" /></svg>,
    <span key="r" className="text-[14px] text-[#eee]">中</span>,
  ];
  return (
    <div className="flex h-10 shrink-0 items-center bg-[#121b21] text-white">
      <div className="flex h-10 w-12 shrink-0 items-center justify-center">
        <svg width="16" height="16" viewBox="0 0 16 16"><path d="M0 2.300l6.500-.9v6.200H0zM7.400 1.300L16 0v7.600H7.400zM0 8.400h6.500v6.200L0 13.700zM7.400 8.400H16V16l-8.600-1.300z" fill="#fff" /></svg>
      </div>
      <div className="flex h-10 w-12 shrink-0 items-center justify-center">
        <div className="h-[15px] w-[15px] rounded-full border-[2px] border-white" />
      </div>
      <div className="flex h-10 w-12 shrink-0 items-center justify-center">
        <svg width="16" height="15" viewBox="0 0 16 15"><path d="M1 0v2h10V0M1 15v-2h10v2M.5 4.500h11v6H.5z" fill="none" stroke="#fff" /><path d="M14 1h2v3h-2zM14 6h2v3h-2z" fill="#fff" /></svg>
      </div>
      <div className="ml-[2px] flex">
        <TaskIcon>
          <svg width="22" height="25" viewBox="0 0 22 25"><path d="M1 13C1 4 9 0 14 1c6 1 8 7 8 14H9q1 5 6 4 3 0 6-2v5q-4 3-9 2C5 24 1 20 1 13zm8-3h6q0-4-3-4t-3 4z" fill="#0f70c5" /></svg>
        </TaskIcon>
        <TaskIcon run>
          <svg width="23" height="22" viewBox="0 0 23 22"><path d="M0 2h9l2 3h12v17H0z" fill="#f4d78a" /><path d="M0 5h23v3H0z" fill="#e8bd5b" /><path d="M6 14h11v8H6z" fill="#4aa3df" /><path d="M9 18h5v4H9z" fill="#f3e7c2" /></svg>
        </TaskIcon>
        <TaskIcon>
          <svg width="24" height="28" viewBox="0 0 24 28"><path d="M8 8V4q0-3 4-3t4 3v4" fill="none" stroke="#fff" strokeWidth="1.500" /><rect y="7" width="24" height="21" rx="1.500" fill="#fff" /><path d="M6 12h5.500v5H6z" fill="#f25022" /><path d="M12.500 12H18v5h-5.500z" fill="#7fba00" /><path d="M6 18h5.500v5H6z" fill="#00a4ef" /><path d="M12.500 18H18v5h-5.500z" fill="#ffb900" /></svg>
        </TaskIcon>
        <TaskIcon>
          <svg width="24" height="19" viewBox="0 0 24 19"><path d="M0 6l12-6 12 6v13H0z" fill="#fff" /><path d="M0 6l12 7 8-2-8 2 2 6" fill="none" stroke="#121b21" strokeWidth="1.500" /></svg>
        </TaskIcon>
        <TaskIcon run>
          <svg width="24" height="24" viewBox="0 0 24 24"><circle cx="12" cy="12" r="12" fill="#dd4b39" /><path d="M12 24a12 12 0 0 1-10.400-18L7 15l5 9z" fill="#3fa14a" /><path d="M12 24l5-9 1-9h5a12 12 0 0 1-11 18z" fill="#f7c324" /><circle cx="12" cy="12" r="5.500" fill="#4a8af4" stroke="#fff" strokeWidth="1.500" /></svg>
        </TaskIcon>
        <TaskIcon run>
          <svg width="20" height="28" viewBox="0 0 20 28"><path d="M2 0h13l4 4v23H2z" fill="#c9d8f2" /><circle cx="10" cy="11" r="5" fill="#dcecfb" stroke="#7da2db" strokeWidth="1.500" /><path d="M6 15l-5 6" stroke="#cc9966" strokeWidth="2.500" /></svg>
        </TaskIcon>
        <TaskIcon run>
          <svg width="19" height="29" viewBox="0 0 19 29"><rect width="19" height="29" fill="#fff" /><rect x="2" y="2" width="15" height="6" fill="#222" /><path d="M3 12h3M8 12h3M13 12h3M3 17h3M8 17h3M13 17h3M3 22h3M8 22h3M13 22h3" stroke="#222" strokeWidth="2" /></svg>
        </TaskIcon>
        <TaskIcon run>
          <svg width="22" height="24" viewBox="0 0 22 24"><rect width="22" height="24" rx="2" fill="#f1f1f1" /><path d="M8 3l9 19-8-8-7 5z" fill="#d92d20" /><path d="M8 3L2 19l7-5z" fill="#2e9e48" /></svg>
        </TaskIcon>
        <TaskIcon run>
          <svg width="20" height="30" viewBox="0 0 20 30"><path d="M0 2h18v27H0z" fill="#cfe3a6" /><path d="M0 2h18v5H0z" fill="#eee" /><path d="M4 12v6M7 13v3M10 14h5" stroke="#333" strokeWidth="1.500" /><path d="M18 0l2 2-7 14-2-1z" fill="#d8ac3a" /></svg>
        </TaskIcon>
        <TaskIcon>
          <svg width="24" height="28" viewBox="0 0 24 28"><path d="M3 15C3 8 9 4 14 5c5 1 7 6 7 11H10q1 4 5 3 3 0 5-2v4q-3 2-7 2C7 23 3 20 3 15zm7-2h6q0-4-3-4t-3 4z" fill="#31b3e6" /><path d="M22 1q3 4-6 11T3 24q-4 1-1-7" fill="none" stroke="#e8b93a" strokeWidth="1.500" /></svg>
        </TaskIcon>
        <TaskIcon>
          <div className="flex h-6 w-6 items-center justify-center rounded-[3px] bg-[#e1251b] text-[11px] leading-none font-bold text-white">有道</div>
        </TaskIcon>
        <TaskIcon run>
          <div className="relative flex h-[28px] w-6 flex-col items-center justify-center bg-[#f08c1f] text-white">
            <span className="text-[17px] leading-[15px] font-bold italic">G</span>
            <span className="text-[6px] leading-[7px]">PDF</span>
          </div>
        </TaskIcon>
        <TaskIcon run>
          <svg width="25" height="26" viewBox="0 0 25 26"><path d="M0 0h12l13 13H13z" fill="#c6cf2c" /><path d="M0 26h12l13-13H13z" fill="#8f9412" /></svg>
        </TaskIcon>
        <TaskIcon run active>
          <svg width="21" height="24" viewBox="0 0 21 24"><rect x="8" y="3" width="13" height="18" fill="#fff" /><path d="M11 7h8M11 10h8M11 13h8M11 16h8" stroke={BLUE} strokeWidth="1.500" /><path d="M0 3l12-3v24L0 21z" fill={BLUE} /><text x="2" y="16" fontSize="10" fontWeight="700" fill="#fff" fontFamily="Liberation Sans">W</text></svg>
        </TaskIcon>
        <TaskIcon run>
          <svg width="22" height="24" viewBox="0 0 22 24"><rect x="8" y="3" width="14" height="18" fill="#fff" /><path d="M10 7h10M10 11h10M10 15h10M15 4v16" stroke="#1f7244" strokeWidth="1.200" /><path d="M0 3l12-3v24L0 21z" fill="#1f7244" /><text x="3" y="16" fontSize="10" fontWeight="700" fill="#fff" fontFamily="Liberation Sans">X</text></svg>
        </TaskIcon>
        <TaskIcon run>
          <svg width="25" height="23" viewBox="0 0 25 23"><circle cx="10" cy="9" r="9" fill="#7ed321" /><circle cx="18" cy="15" r="7" fill="#eee" /><circle cx="7" cy="7" r="1.300" fill="#235" /><circle cx="13" cy="7" r="1.300" fill="#235" /></svg>
        </TaskIcon>
        <TaskIcon run>
          <svg width="23" height="26" viewBox="0 0 23 26"><path d="M1 3l20-2 2 17-20 2z" fill="#9aa0a6" /><path d="M4 6l15-2 1 12-15 2z" fill="#e7f0f7" /><path d="M5 12l4-1 2-4 2 7 2-3h4" fill="none" stroke="#5b93c9" /><ellipse cx="12" cy="23" rx="7" ry="3" fill="#ccc" /></svg>
        </TaskIcon>
        <TaskIcon run>
          <svg width="24" height="28" viewBox="0 0 24 28"><circle cx="16" cy="8" r="7" fill="#4f9ad9" /><circle cx="14" cy="20" r="8" fill="#2e7cc9" /><circle cx="9" cy="13" r="8" fill="#f6b93b" /></svg>
        </TaskIcon>
        <TaskIcon run>
          <svg width="24" height="26" viewBox="0 0 24 26"><path d="M0 15l8-5 4-9 6 15 4 8-7-3-4 3-2-7z" fill="#d2691e" /><path d="M0 15l8-5 3 6-4 1z" fill="#2f78bb" /><path d="M12 1l6 15-5 2-2-8z" fill="#f39c3f" /></svg>
        </TaskIcon>
        <TaskIcon run>
          <svg width="22" height="26" viewBox="0 0 22 26"><rect x="9" y="3" width="13" height="20" fill="#fff" /><circle cx="16" cy="9" r="3" fill="none" stroke={BLUE} /><path d="M16 12v5M13 17h6" stroke={BLUE} /><path d="M0 3l13-3v26L0 23z" fill="#2e4b9e" /><text x="3" y="17" fontSize="10" fontWeight="700" fill="#fff" fontFamily="Liberation Sans">V</text></svg>
        </TaskIcon>
        <TaskIcon run>
          <svg width="21" height="22" viewBox="0 0 21 22"><rect width="21" height="22" rx="1" fill="#f1efec" /><circle cx="7" cy="12" r="3" fill="#e36c3a" /><rect x="13" y="5" width="4" height="13" fill="#e36c3a" /></svg>
        </TaskIcon>
      </div>
      <div className="ml-auto flex h-10 items-center">
        <div className="mr-[12px] flex w-[24px] justify-center">
          <svg width="16" height="17" viewBox="0 0 16 17"><circle cx="5" cy="8" r="2.500" fill="none" stroke="#eee" /><path d="M1 16q0-4 4-4t4 4" fill="none" stroke="#eee" /><circle cx="11" cy="3.500" r="2.500" fill="none" stroke="#eee" /><path d="M9 7.500q5-1 6 4" fill="none" stroke="#eee" /></svg>
        </div>
        {tray.map((t, i) => (
          <div key={i} className="flex w-[24px] shrink-0 items-center justify-center">{t}</div>
        ))}
        <div className="flex w-[32px] justify-center">
          <div className="flex h-[19px] w-[17px] -rotate-6 items-center justify-center rounded-[3px] bg-[#e9531f] font-['Liberation_Sans',sans-serif] text-[16px] font-bold text-white">S</div>
        </div>
        <div className="flex w-[76px] flex-col items-center text-[12.500px] leading-[19px] text-[#eee]">
          <span>19:45</span>
          <span>2018/11/27</span>
        </div>
        <div className="relative flex w-[40px] justify-center">
          <svg width="17" height="16" viewBox="0 0 17 16"><path d="M0 0h16v11H6l-3 4v-4H0z" fill="#eee" /><path d="M3 3h10M3 6h10" stroke="#121b21" /></svg>
          <div className="absolute top-[7px] left-[19px] flex h-[16px] w-[16px] items-center justify-center rounded-full border border-[#ccc] bg-[#333] text-[11px] font-bold text-white">1</div>
        </div>
        <div className="h-10 w-[12px] border-r border-[#555]" />
      </div>
    </div>
  );
}

export default function App() {
  return (
    <div className="relative flex h-[1080px] w-[1920px] flex-col overflow-hidden bg-white font-['Noto_Sans','Noto_Sans_CJK_SC',sans-serif]">
      <WatermarkArt />
      <div className="relative">
        <TitleBar />
        <TabRow />
      </div>
      <Ribbon />
      <div className="flex min-h-0 flex-1 bg-linear-to-b from-white to-[#f0f0f0]">
        <NavPane />
        <Document />
      </div>
      <SogouBar />
      <StatusBar />
      <Taskbar />
    </div>
  );
}
